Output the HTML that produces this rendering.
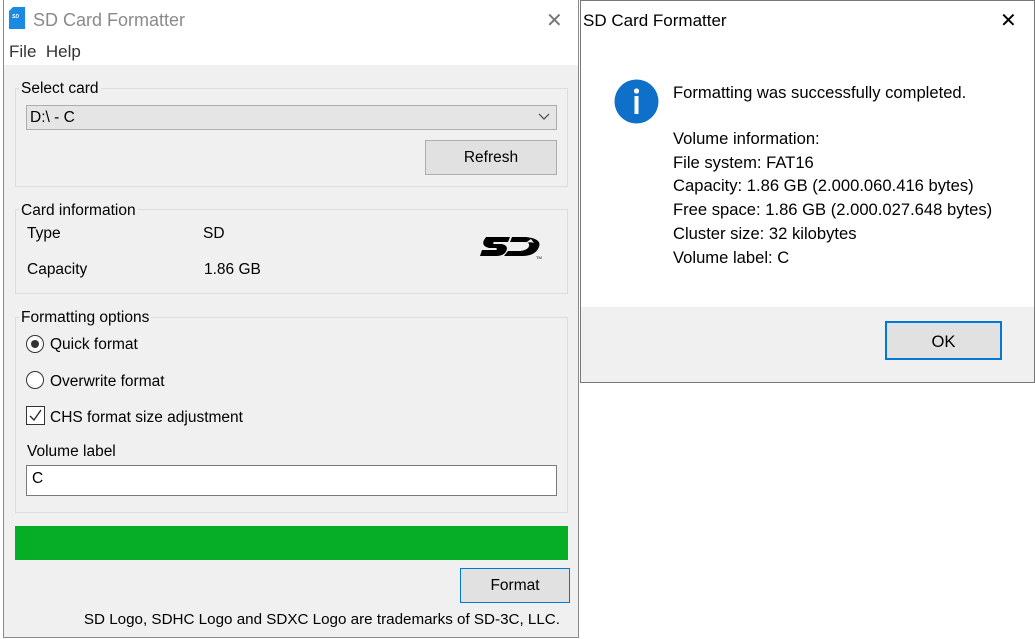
<!DOCTYPE html>
<html><head><meta charset="utf-8"><style>
*{margin:0;padding:0;box-sizing:border-box}
body{width:1035px;height:639px;background:#fff;position:relative;overflow:hidden;font-family:"Liberation Sans",sans-serif;font-size:15.5px;color:#000}
.a{position:absolute;white-space:nowrap}
.grp{position:absolute;border:1px solid #dcdcdc}
.btn{position:absolute;background:#e1e1e1;border:1px solid #adadad;text-align:center}
</style></head><body>
<!-- left window -->
<div class="a" style="left:3px;top:0;width:576px;height:638px;border:1px solid #8a8a8a;border-top:none;background:#f0f0f0"></div>
<div class="a" style="left:4px;top:0;width:574px;height:65px;background:#fff"></div>
<svg class="a" style="left:9px;top:7px" width="16" height="22" viewBox="0 0 16 22"><path d="M4 0H16V22H0V4Z" fill="#1a8be0"/><text x="3" y="11" font-size="5" fill="#fff" font-style="italic" font-weight="bold">SD</text></svg>
<div class="a" style="left:33px;top:10px;font-size:18px;color:#8a8a8a">SD Card Formatter</div>
<div class="a" style="left:546px;top:8px;font-size:20px;color:#777">✕</div>
<div class="a" style="left:9px;top:42px;font-size:17px;color:#333">File&nbsp; Help</div>

<div class="grp" style="left:15px;top:88px;width:553px;height:99px"></div>
<div class="a" style="left:19px;top:80px;background:#f0f0f0;padding:0 2px">Select card</div>
<div class="a" style="left:26px;top:105px;width:531px;height:25px;background:#e5e5e5;border:1px solid #adadad"></div>
<div class="a" style="left:30px;top:109px">D:\ - C</div>
<svg class="a" style="left:538px;top:113px" width="12" height="8"><path d="M1 1L6 6L11 1" fill="none" stroke="#444" stroke-width="1.2"/></svg>
<div class="btn" style="left:425px;top:140px;width:132px;height:35px;line-height:33px">Refresh</div>

<div class="grp" style="left:15px;top:209px;width:553px;height:85px"></div>
<div class="a" style="left:19px;top:202px;background:#f0f0f0;padding:0 2px">Card information</div>
<div class="a" style="left:27px;top:225px">Type</div>
<div class="a" style="left:203px;top:225px">SD</div>
<div class="a" style="left:27px;top:261px">Capacity</div>
<div class="a" style="left:204px;top:261px">1.86 GB</div>
<svg class="a" style="left:480px;top:235px" width="64" height="26" viewBox="0 0 64 26"><path d="M6 2H30L28 7H14Q12 8 14 9H22Q30 11 25 18Q22 21 16 21H0L2 15H16Q18 14 16 13H9Q1 11 4 5Z" fill="#000"/><path d="M32 2H46Q64 4 58 14Q54 21 42 21H24L28 16H40Q48 15 49 11Q50 7 44 7H30Z" fill="#000"/><path d="M44 9Q50 6 54 8L51 4Z" fill="#f0f0f0"/><text x="56" y="24" font-size="4">TM</text></svg>

<div class="grp" style="left:15px;top:317px;width:553px;height:196px"></div>
<div class="a" style="left:19px;top:309px;background:#f0f0f0;padding:0 2px">Formatting options</div>
<div class="a" style="left:26px;top:335px;width:18px;height:18px;border:1.5px solid #333;border-radius:50%;background:#fff"></div>
<div class="a" style="left:31px;top:340px;width:8px;height:8px;border-radius:50%;background:#333"></div>
<div class="a" style="left:50px;top:336px">Quick format</div>
<div class="a" style="left:26px;top:371px;width:18px;height:18px;border:1.5px solid #333;border-radius:50%;background:#fff"></div>
<div class="a" style="left:50px;top:373px">Overwrite format</div>
<div class="a" style="left:26px;top:406px;width:19px;height:19px;border:1.2px solid #333;background:#fff"></div>
<svg class="a" style="left:28px;top:408px" width="15" height="15"><path d="M2 8L6 12L13 2" fill="none" stroke="#222" stroke-width="1.3"/></svg>
<div class="a" style="left:50px;top:409px">CHS format size adjustment</div>
<div class="a" style="left:27px;top:443px">Volume label</div>
<div class="a" style="left:26px;top:465px;width:531px;height:31px;background:#fff;border:1px solid #7a7a7a"></div>
<div class="a" style="left:32px;top:470px">C</div>

<div class="a" style="left:15px;top:526px;width:553px;height:34px;background:#06ad26"></div>
<div class="btn" style="left:460px;top:568px;width:110px;height:35px;line-height:33px;border:1px solid #0078d7">Format</div>
<div class="a" style="right:475px;top:611px;font-size:15.2px">SD Logo, SDHC Logo and SDXC Logo are trademarks of SD-3C, LLC.</div>

<!-- right dialog -->
<div class="a" style="left:580px;top:0;width:455px;height:383px;border:1px solid #777;background:#fff"></div>
<div class="a" style="left:581px;top:307px;width:453px;height:75px;background:#f0f0f0"></div>
<div class="a" style="left:583px;top:11px;font-size:17px">SD Card Formatter</div>
<div class="a" style="left:1000px;top:8px;font-size:20px">✕</div>
<svg class="a" style="left:614px;top:79px" width="45" height="45"><circle cx="22.5" cy="22.5" r="22" fill="#0e70c8"/><circle cx="22.5" cy="12" r="2.6" fill="#fff"/><rect x="20.5" y="17" width="4" height="18" fill="#fff"/></svg>
<div class="a" style="left:673px;top:81px;line-height:23.7px;font-size:16.6px">Formatting was successfully completed.</div>
<div class="a" style="left:673px;top:127px;line-height:23.7px;font-size:16.6px">Volume information:<br>File system: FAT16<br>Capacity: 1.86 GB (2.000.060.416 bytes)<br>Free space: 1.86 GB (2.000.027.648 bytes)<br>Cluster size: 32 kilobytes<br>Volume label: C</div>
<div class="btn" style="left:885px;top:321px;width:117px;height:39px;line-height:37px;border:2px solid #0078d7;font-size:16.6px">OK</div>
</body></html>
